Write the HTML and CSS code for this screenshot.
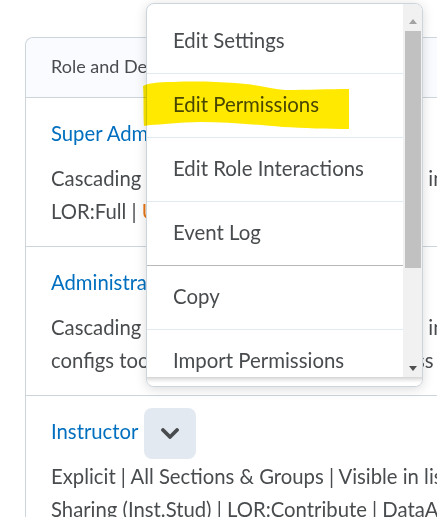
FILE: index.html
```html
<!DOCTYPE html>
<html>
<head>
    <meta charset="UTF-8">
    <meta name="viewport" content="width=device-width, initial-scale=1.0">
    <title>Roles and Permissions</title>
    <link rel="stylesheet" href="styles.css">
</head>

<body>

    <!-- Roles table -->
    <div class="roles-table">
        <div class="roles-head">Role and Description</div>

        <div class="role-row">
            <div class="role-title">
                <a href="#">Super Administrator</a>
            </div>
            <div class="role-desc">
                <div>Cascading | All Sections &amp; Groups | Visible in lists | Can impersonate</div>
                <div>LOR:Full | <span class="warn">Unrestricted</span></div>
            </div>
        </div>

        <div class="role-row">
            <div class="role-title">
                <a href="#">Administrator</a>
            </div>
            <div class="role-desc">
                <div>Cascading | All Sections &amp; Groups | Visible in lists | Can impersonate</div>
                <div>configs tool | Sharing (Admin) | Class access</div>
            </div>
        </div>

        <div class="role-row">
            <div class="role-title">
                <a href="#">Instructor</a>
                <button class="chevron-btn" aria-label="Actions for Instructor">
                    <svg width="18" height="11" viewBox="0 0 18 11">
                        <path d="M2 2 L9 9 L16 2" fill="none" stroke="#494c4e" stroke-width="3.8" stroke-linecap="round" stroke-linejoin="round"/>
                    </svg>
                </button>
            </div>
            <div class="role-desc">
                <div>Explicit | All Sections &amp; Groups | Visible in lists | Classlist</div>
                <div>Sharing (Inst.Stud) | LOR:Contribute | DataAccess</div>
            </div>
        </div>
    </div>

    <!-- Actions menu for a role -->
    <div class="menu">
        <div class="menu-body">
            <ul class="menu-list">
                <li>Edit Settings</li>
                <li>Edit Permissions</li>
                <li>Edit Role Interactions</li>
                <li class="group-end">Event Log</li>
                <li>Copy</li>
                <li>Import Permissions</li>
                <li>Export Permissions</li>
            </ul>
            <div class="scrollbar">
                <span class="sb-up"><i></i></span>
                <span class="sb-thumb"></span>
                <span class="sb-track"></span>
                <span class="sb-down"><i></i></span>
            </div>
        </div>
        <div class="menu-foot"></div>
    </div>

    <!-- highlighter stroke -->
    <svg class="marker" width="208" height="52" viewBox="0 0 208 52">
        <path d="M0 6 C6 3 14 2 30 2 C55 1 75 2 92 3 C112 4 128 9 142 10 C165 10 185 9 206 9 L206 49 C185 49 160 48 140 47 C115 45 85 42 58 42 C35 42 18 45 7 45 L1 46 C0 34 1 18 0 6 Z" fill="#ffe900"/>
    </svg>

</body>
</html>
```

FILE: styles.css
```css
/* General Styling */
html, body {
    overflow: hidden;
}

body {
    font-family: Lato, 'Open Sans', sans-serif;
    color: #494c4e;
    background: #ffffff;
    margin: 0;
    padding: 37px 0 0 25px;
}

/* Roles table */
.roles-table {
    width: 900px;
    border: 1px solid #cdd5dc;
    border-bottom: none;
    border-radius: 8px 8px 0 0;
}

.roles-head {
    height: 60px;
    box-sizing: border-box;
    display: flex;
    align-items: center;
    padding: 0 25px 4px;
    background: #f9fbff;
    border-bottom: 1px solid #cdd5dc;
    border-radius: 8px 8px 0 0;
    font-size: 18px;
}

.role-row {
    padding: 12px 25px 18px;
    border-bottom: 1px solid #cdd5dc;
    font-size: 20.3px;
}

.role-title {
    height: 51px;
    display: flex;
    align-items: center;
}

.role-title a {
    color: #006fbf;
    text-decoration: none;
    margin-bottom: 5px;
}

.chevron-btn {
    width: 52px;
    height: 51px;
    margin-left: 6px;
    border: none;
    border-radius: 8px;
    background: #e3e9f1;
    display: flex;
    align-items: center;
    justify-content: center;
    padding: 0;
}

.role-desc {
    margin-top: 1px;
    line-height: 33px;
    white-space: nowrap;
}

.warn {
    color: #e87511;
}

/* Actions menu */
.menu {
    position: absolute;
    left: 146px;
    top: 3px;
    width: 277px;
    height: 384px;
    box-sizing: border-box;
    border: 1px solid #cdd5dc;
    border-radius: 8px;
    background: #ffffff;
    box-shadow: 0 2px 12px rgba(0, 0, 0, 0.15);
    display: flex;
    flex-direction: column;
    overflow: hidden;
}

.menu-body {
    height: 373px;
    display: flex;
}

.menu-list {
    flex: 1;
    list-style: none;
    margin: 0;
    padding: 6px 0 0;
    overflow: hidden;
}

.menu-list li {
    height: 64px;
    box-sizing: border-box;
    display: flex;
    align-items: center;
    padding: 0 0 4px 26px;
    border-bottom: 1px solid #e3e9f1;
    font-size: 20.4px;
    white-space: nowrap;
}

.menu-list li.group-end {
    border-bottom-color: #b8b8b8;
}

/* scrollbar of the menu list */
.scrollbar {
    width: 19px;
    background: #f1f1f1;
    display: flex;
    flex-direction: column;
}

.sb-up, .sb-down {
    display: flex;
    justify-content: center;
}

.sb-up {
    height: 27px;
    align-items: flex-end;
    box-sizing: border-box;
    padding-bottom: 7px;
}

.sb-down {
    height: 17px;
    align-items: center;
}

.sb-up i, .sb-down i {
    width: 0;
    height: 0;
    border-left: 4px solid transparent;
    border-right: 4px solid transparent;
}

.sb-up i {
    border-bottom: 5px solid #a3a3a3;
}

.sb-down i {
    border-top: 5px solid #505050;
}

.sb-thumb {
    height: 237px;
    margin: 0 1px 0 2px;
    background: #c1c1c1;
}

.sb-track {
    flex: 1;
}

.menu-foot {
    flex: 1;
    background: linear-gradient(to bottom, #d4d4d4 0, #ededed 3px, #ffffff 6px);
}

/* highlighter over a menu entry */
.marker {
    position: absolute;
    left: 143px;
    top: 80px;
    mix-blend-mode: multiply;
}
```
